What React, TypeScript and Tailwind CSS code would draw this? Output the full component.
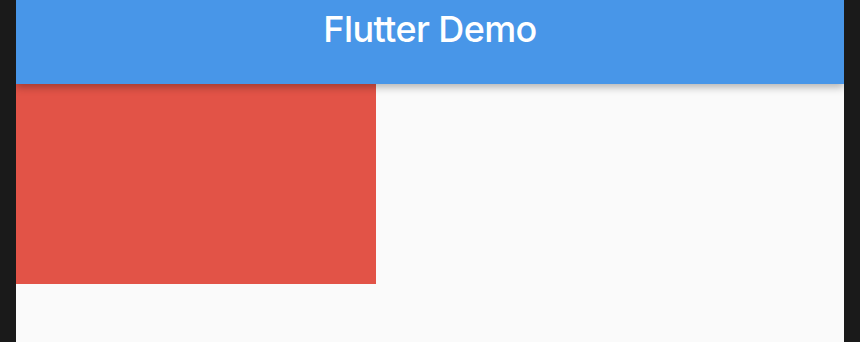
export default function App() {
  return (
    <div className="flex h-[342px] w-[860px] bg-[#1a1a1a]" style={{ fontFamily: "Inter, 'Noto Sans', sans-serif" }}>
      <div className="mx-4 flex flex-1 flex-col overflow-hidden bg-[#fafafa]">
        <header className="relative z-10 flex h-[84px] shrink-0 items-start justify-center bg-[#4896e8] pt-[7px] shadow-[0_3px_8px_rgba(0,0,0,0.3)]">
          <h1 className="text-[36px] font-medium leading-[44px] tracking-[-0.6px] text-white">Flutter Demo</h1>
        </header>
        <div className="h-[200px] w-[360px] bg-[#e25347]" />
      </div>
    </div>
  );
}
